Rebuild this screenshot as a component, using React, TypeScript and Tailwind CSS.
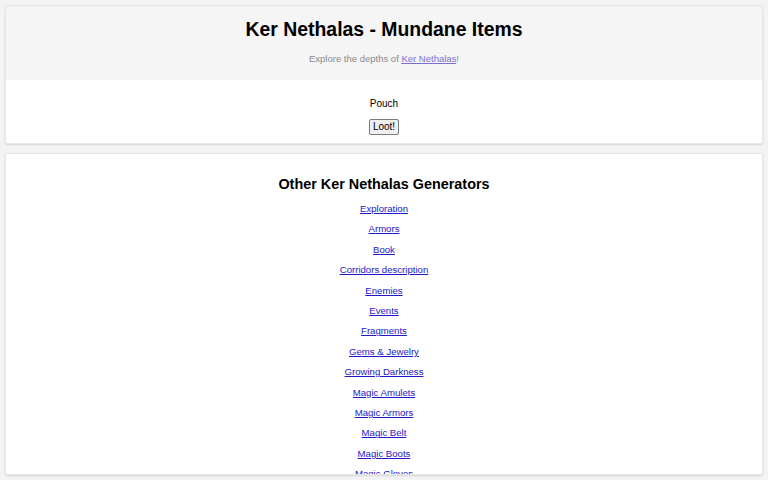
const links = [
  'Exploration',
  'Armors',
  'Book',
  'Corridors description',
  'Enemies',
  'Events',
  'Fragments',
  'Gems & Jewelry',
  'Growing Darkness',
  'Magic Amulets',
  'Magic Armors',
  'Magic Belt',
  'Magic Boots',
  'Magic Gloves',
];

const App = () => {
  return (
    <div className="h-[480px] overflow-hidden bg-[#f3f3f3] px-[5px] pt-[5px] font-['Liberation_Sans',Arial,sans-serif] text-black">
      {/* Generator card */}
      <div className="rounded-[2px] border border-[#e6e6e6] bg-white shadow-[0_1px_2px_rgba(0,0,0,0.12)]">
        <div className="flex h-[74px] flex-col items-center bg-[#f5f5f5] pt-[13px]">
          <h1 className="text-[19.4px] font-bold leading-[20px]">Ker Nethalas - Mundane Items</h1>
          <p className="mt-[14px] text-[9.5px] leading-[12px] text-[#8a8a8a]">
            Explore the depths of{' '}
            <a href="#" className="text-[#7b70d8] underline">
              Ker Nethalas
            </a>
            !
          </p>
        </div>
        <div className="flex h-[63px] flex-col items-center pt-[18px]">
          <div className="text-[10px] leading-[12px]">Pouch</div>
          <button className="mt-[9px] rounded-[2px] border border-[#7a7a7a] bg-[#efefef] px-[3px] text-[10px] leading-[14px]">
            Loot!
          </button>
        </div>
      </div>

      {/* Other generators */}
      <div className="mt-[9px] h-[322px] overflow-hidden rounded-[2px] border border-[#e6e6e6] bg-white shadow-[0_1px_2px_rgba(0,0,0,0.12)]">
        <div className="flex flex-col items-center pt-[21px]">
          <h2 className="text-[14.4px] font-bold leading-[18px]">Other Ker Nethalas Generators</h2>
          <ul className="mt-[6px] flex flex-col items-center">
            {links.map((l) => (
              <li key={l} className="text-[9.6px] leading-[20.4px]">
                <a href="#" className="text-[#2318c8] underline">
                  {l}
                </a>
              </li>
            ))}
          </ul>
        </div>
      </div>
    </div>
  );
};

export default App;
